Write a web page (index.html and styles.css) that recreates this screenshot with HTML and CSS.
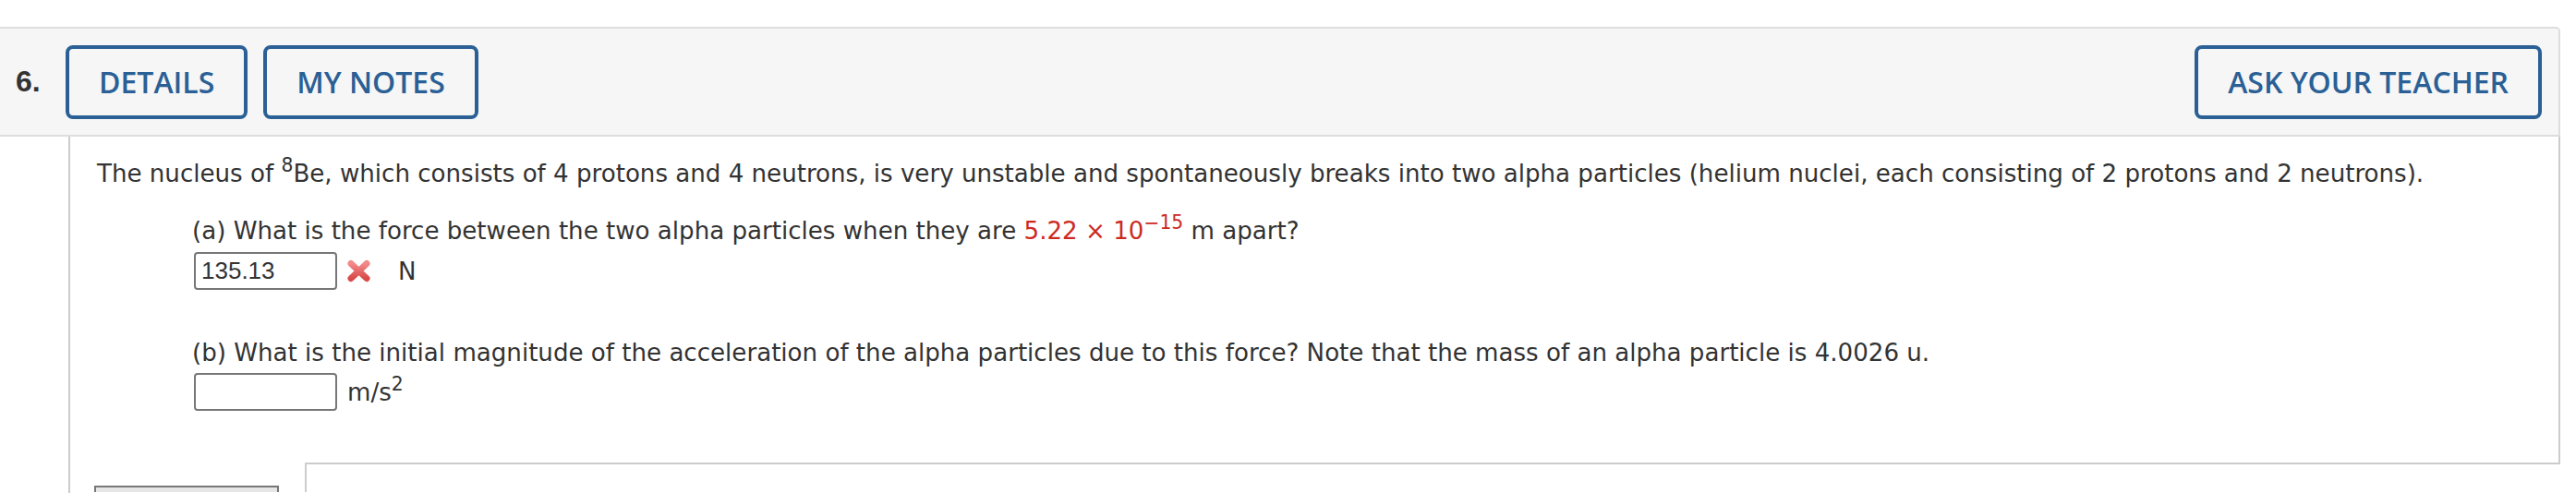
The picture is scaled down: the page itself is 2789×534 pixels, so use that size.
FILE: index.html
```html
<!DOCTYPE html>
<html>
<head>
<meta charset="utf-8">
<link rel="stylesheet" href="styles.css">
</head>
<body>
<div class="header">
  <div class="qnum">6.</div>
  <button class="btn">DETAILS</button>
  <button class="btn">MY NOTES</button>
  <button class="btn btn-ask">ASK YOUR TEACHER</button>
</div>
<div class="panel">
  <div class="qbody">
    <p class="stem">The nucleus of <sup>8</sup>Be, which consists of 4 protons and 4 neutrons, is very unstable and spontaneously breaks into two alpha particles (helium nuclei, each consisting of 2 protons and 2 neutrons).</p>
    <div class="part part-a">
      <p class="prompt">(a) What is the force between the two alpha particles when they are <span class="red">5.22 × 10<sup>−15</sup></span> m apart?</p>
      <div class="answer">
        <input class="field" type="text" value="135.13">
        <svg class="xmark" width="27" height="25" viewBox="0 0 27 25">
          <defs>
            <linearGradient id="xg" x1="0" y1="0" x2="0" y2="1">
              <stop offset="0" stop-color="#f28a8a"/>
              <stop offset="1" stop-color="#d94a4a"/>
            </linearGradient>
          </defs>
          <path d="M5 4.5 L22 20.5 M22 4.5 L5 20.5" stroke="url(#xg)" stroke-width="7" stroke-linecap="round" fill="none"/>
        </svg>
        <span class="unit unit-n">N</span>
      </div>
    </div>
    <div class="part part-b">
      <p class="prompt">(b) What is the initial magnitude of the acceleration of the alpha particles due to this force? Note that the mass of an alpha particle is 4.0026 u.</p>
      <div class="answer">
        <input class="field" type="text" value="">
        <span class="unit unit-ms">m/s<sup>2</sup></span>
      </div>
    </div>
  </div>
  <div class="footer">
    <div class="submit"></div>
    <div class="nextbox"></div>
  </div>
</div>
</body>
</html>
```

FILE: styles.css
```css
html, body {
  margin: 0;
  padding: 0;
  background: #ffffff;
  overflow: hidden;
}
body {
  width: 2789px;
  height: 534px;
  font-family: "DejaVu Sans", Verdana, sans-serif;
  color: #333333;
}
.header {
  margin: 29px 17px 0 0;
  height: 119px;
  box-sizing: border-box;
  border: 2px solid #dddddd;
  border-left: none;
  border-radius: 0 5px 0 0;
  background: #f6f6f6;
  display: flex;
  align-items: center;
  padding: 0 18px 0 17px;
  gap: 17px;
}
.qnum {
  width: 37px;
  font-family: "Liberation Sans", Arial, sans-serif;
  font-weight: bold;
  font-size: 32px;
  color: #333333;
}
.btn {
  height: 80px;
  box-sizing: border-box;
  border: 4px solid #2a6095;
  border-radius: 8px;
  background: transparent;
  color: #2a6095;
  font-family: "Open Sans", sans-serif;
  font-weight: 600;
  font-size: 32px;
  padding: 0 32px;
  margin: 0;
}
.btn-ask {
  margin-left: auto;
}
.panel {
  margin: 0 17px 0 74px;
  border-left: 2px solid #cccccc;
  height: 386px;
  overflow: hidden;
}
.qbody {
  border-right: 2px solid #cccccc;
  padding: 20px 0 56px 29px;
}
p {
  margin: 0;
  font-size: 26.1px;
  line-height: 40px;
  white-space: nowrap;
}
sup {
  font-size: 0.78em;
  line-height: 0;
  vertical-align: 0.55em;
}
.red {
  color: #cc2a1f;
}
.part {
  padding-left: 103px;
}
.part-a {
  margin-top: 22px;
}
.part-b {
  margin-top: 48px;
}
.answer {
  display: flex;
  align-items: center;
  margin-top: 3px;
}
.part-b .answer {
  margin-top: 2px;
}
.field {
  width: 155px;
  height: 41px;
  box-sizing: border-box;
  border: 2px solid #777777;
  border-radius: 4px;
  padding: 0 6px;
  margin: 0 0 0 2px;
  font-family: "Liberation Sans", Arial, sans-serif;
  font-size: 26px;
  color: #333333;
  background: #ffffff;
}
.xmark {
  margin-left: 10px;
  display: block;
}
.unit {
  font-size: 26.1px;
  line-height: 40px;
}
.unit-n {
  margin-left: 29px;
}
.unit-ms {
  margin-left: 11px;
}
.footer {
  display: flex;
  align-items: flex-start;
}
.submit {
  margin: 25px 0 0 26px;
  width: 200px;
  height: 7px;
  box-sizing: border-box;
  background: #e6e6e6;
  border: 2px solid #777777;
  border-bottom: none;
}
.nextbox {
  margin-left: 28px;
  flex: 1;
  height: 30px;
  border-top: 2px solid #cccccc;
  border-left: 2px solid #cccccc;
}
```
